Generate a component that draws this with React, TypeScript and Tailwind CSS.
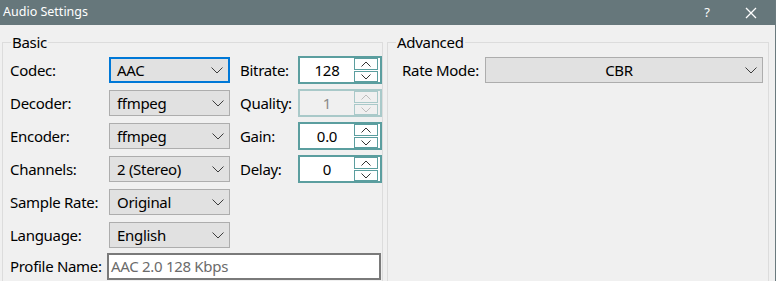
import React from 'react';

const font = { fontFamily: '"Noto Sans", "Liberation Sans", sans-serif' };

function Chevron({ className = '' }: { className?: string }) {
  return (
    <svg width="12" height="7" viewBox="0 0 12 7" className={className}>
      <polyline points="0.5,0.5 6,6 11.5,0.5" fill="none" stroke="#3c3c3c" strokeWidth="1" />
    </svg>
  );
}

function Combo({ value, focused, center, width = 'w-[121px]' }: { value: string; focused?: boolean; center?: boolean; width?: string }) {
  return (
    <div
      className={`${width} h-[26px] flex items-center bg-[#e1e1e1] ${
        focused ? 'border-2 border-[#0078d7] pl-[6px]' : 'border border-[#adadad] pl-[7px]'
      } pr-[5px]`}
    >
      <span className={`flex-1 text-[15px] leading-none text-black ${center ? 'text-center' : ''}`}>{value}</span>
      <Chevron />
    </div>
  );
}

function SpinArrow({ up, disabled }: { up?: boolean; disabled?: boolean }) {
  return (
    <svg width="10" height="6" viewBox="0 0 10 6">
      <polyline
        points={up ? '0.5,5.5 5,1 9.5,5.5' : '0.5,0.5 5,5 9.5,0.5'}
        fill="none"
        stroke={disabled ? '#bdbdbd' : '#333'}
        strokeWidth="1"
      />
    </svg>
  );
}

function Spin({ value, disabled }: { value: string; disabled?: boolean }) {
  const border = disabled ? 'border-[#a9c9c9]' : 'border-[#5b9e9f]';
  return (
    <div className={`w-[84px] h-[28px] flex items-center border-2 ${border} ${disabled ? 'bg-[#f0f0f0]' : 'bg-white'} pr-[2px]`}>
      <span className={`flex-1 text-center text-[15px] leading-none ${disabled ? 'text-[#8a8a8a]' : 'text-black'}`}>{value}</span>
      <div className="flex flex-col gap-[1px]">
        <div className={`w-[24px] h-[12px] border ${border} flex items-center justify-center`}>
          <SpinArrow up disabled={disabled} />
        </div>
        <div className={`w-[24px] h-[11px] border ${border} flex items-center justify-center`}>
          <SpinArrow disabled={disabled} />
        </div>
      </div>
    </div>
  );
}

export default function App() {
  const rows = [
    { label: 'Codec:', value: 'AAC', focused: true, spin: { label: 'Bitrate:', value: '128' } },
    { label: 'Decoder:', value: 'ffmpeg', spin: { label: 'Quality:', value: '1', disabled: true } },
    { label: 'Encoder:', value: 'ffmpeg', spin: { label: 'Gain:', value: '0.0' } },
    { label: 'Channels:', value: '2 (Stereo)', spin: { label: 'Delay:', value: '0' } },
    { label: 'Sample Rate:', value: 'Original' },
    { label: 'Language:', value: 'English' },
  ];

  return (
    <div className="w-[776px] h-[281px] bg-[#f0f0f0] overflow-hidden flex flex-col border-r border-[#6a7a7e] tracking-[-0.3px]" style={font}>
      {/* Title bar */}
      <div className="h-[25px] shrink-0 bg-[#66777b] flex items-center text-white">
        <span className="pl-[3px] text-[12.5px] flex-1 tracking-normal">Audio Settings</span>
        <span className="w-[12px] text-[13px] text-center mr-[32px]">?</span>
        <svg width="12" height="12" viewBox="0 0 12 12" className="mr-[18px]">
          <path d="M1 1 L11 11 M11 1 L1 11" stroke="white" strokeWidth="1.3" />
        </svg>
      </div>

      <div className="flex pl-[2px] pt-[7px] gap-[4px]">
        {/* Basic */}
        <fieldset className="w-[381px] h-[260px] border border-[#dcdcdc] pl-[7px] pt-[5px]">
          <legend className="ml-[1px] px-[1px] text-[15px] leading-[20px] text-black">Basic</legend>
          <div className="flex flex-col gap-[7px]">
            {rows.map((r) => (
              <div key={r.label} className="flex items-center h-[26px] text-[15px] text-black">
                <span className="w-[99px]">{r.label}</span>
                <Combo value={r.value} focused={r.focused} />
                {r.spin && (
                  <>
                    <span className="ml-[10px] w-[58px]">{r.spin.label}</span>
                    <Spin value={r.spin.value} disabled={r.spin.disabled} />
                  </>
                )}
              </div>
            ))}
            <div className="flex items-center mt-[-2px] text-[15px] text-black">
              <span className="w-[97px]">Profile Name:</span>
              <div className="w-[274px] h-[27px] border-2 border-[#7a7a7a] bg-white flex items-center pl-[2px] text-[#6b6b6b]">
                AAC 2.0 128 Kbps
              </div>
            </div>
          </div>
        </fieldset>

        {/* Advanced */}
        <fieldset className="w-[382px] h-[260px] border border-[#dcdcdc] pl-[14px] pr-[5px] pt-[5px]">
          <legend className="ml-[-6px] px-[1px] text-[15px] leading-[20px] text-black">Advanced</legend>
          <div className="flex items-center text-[15px] text-black">
            <span className="w-[83px]">Rate Mode:</span>
            <div className="flex-1">
              <Combo value="CBR" center width="w-full" />
            </div>
          </div>
        </fieldset>
      </div>
    </div>
  );
}
